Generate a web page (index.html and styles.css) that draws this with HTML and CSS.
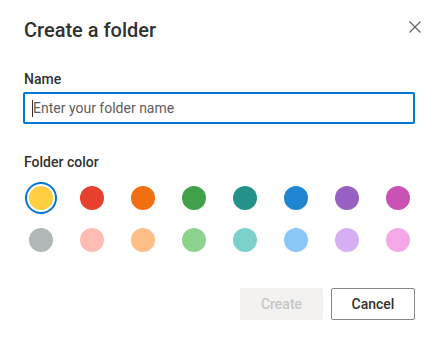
FILE: index.html
```html
<!DOCTYPE html>
<html lang="en">
<head>
<meta charset="utf-8">
<title>Create a folder</title>
<link rel="stylesheet" href="styles.css">
</head>
<body>
<div class="dialog">
  <div class="header">
    <h2 class="title">Create a folder</h2>
    <button class="close" aria-label="Close">
      <svg width="12" height="12" viewBox="0 0 12 12"><path d="M0.5 0.5 L11.5 11.5 M11.5 0.5 L0.5 11.5" stroke="#605e5c" stroke-width="1.1" fill="none"/></svg>
    </button>
  </div>
  <label class="label name-label" for="folder-name">Name</label>
  <div class="field">
    <input id="folder-name" class="input" type="text" placeholder="Enter your folder name">
  </div>
  <div class="label color-label">Folder color</div>
  <div class="swatches">
    <span class="swatch selected"><span class="dot" style="background:#ffcf3f"></span></span>
    <span class="swatch"><span class="dot" style="background:#e7402e"></span></span>
    <span class="swatch"><span class="dot" style="background:#f07011"></span></span>
    <span class="swatch"><span class="dot" style="background:#41a04a"></span></span>
    <span class="swatch"><span class="dot" style="background:#25918b"></span></span>
    <span class="swatch"><span class="dot" style="background:#1f85d0"></span></span>
    <span class="swatch"><span class="dot" style="background:#9960c4"></span></span>
    <span class="swatch"><span class="dot" style="background:#ca52b4"></span></span>
    <span class="swatch"><span class="dot" style="background:#b1b6b8"></span></span>
    <span class="swatch"><span class="dot" style="background:#ffbcb2"></span></span>
    <span class="swatch"><span class="dot" style="background:#ffbe86"></span></span>
    <span class="swatch"><span class="dot" style="background:#8ed290"></span></span>
    <span class="swatch"><span class="dot" style="background:#7bd2cd"></span></span>
    <span class="swatch"><span class="dot" style="background:#8ac7f8"></span></span>
    <span class="swatch"><span class="dot" style="background:#d5aef4"></span></span>
    <span class="swatch"><span class="dot" style="background:#f6a8e6"></span></span>
  </div>
  <div class="actions">
    <button class="btn btn-primary" disabled>Create</button>
    <button class="btn btn-default">Cancel</button>
  </div>
</div>
</body>
</html>
```
FILE: styles.css
```css
* { box-sizing: border-box; }
html, body {
  margin: 0;
  padding: 0;
  background: #ffffff;
}
body {
  font-family: Roboto, "Noto Sans", sans-serif;
  color: #323130;
  -webkit-font-smoothing: antialiased;
}
.dialog {
  width: 438px;
  height: 343px;
  padding: 16px 23px 0 23px;
}
.header {
  display: flex;
  justify-content: space-between;
  align-items: flex-start;
  height: 28px;
}
.title {
  margin: 0 0 0 1px;
  font-size: 20px;
  line-height: 28px;
  font-weight: 500;
  color: #323130;
}
.close {
  width: 22px;
  height: 22px;
  margin-right: -11px;
  padding: 0;
  border: 0;
  background: transparent;
  display: flex;
  align-items: center;
  justify-content: center;
}
.close svg { display: block; }
.label {
  display: block;
  font-size: 14px;
  line-height: 20px;
  font-weight: 500;
  color: #323130;
  margin-left: 1px;
}
.name-label { margin-top: 25px; }
.field {
  position: relative;
  margin-top: 3px;
}
.field::before {
  content: "";
  position: absolute;
  left: 9px;
  top: 8px;
  width: 1px;
  height: 17px;
  background: #323130;
}
.input {
  display: block;
  width: 100%;
  height: 32px;
  border: 2px solid #0078d4;
  border-radius: 2px;
  padding: 0 8px;
  font-family: inherit;
  font-size: 14px;
  color: #323130;
  outline: none;
  background: #fff;
}
.input::placeholder { color: #605e5c; opacity: 1; }
.color-label { margin-top: 28px; }
.swatches {
  display: grid;
  grid-template-columns: repeat(8, 32px);
  grid-auto-rows: 32px;
  column-gap: 19px;
  row-gap: 10px;
  margin-top: 10px;
  padding-left: 2px;
}
.swatch {
  width: 32px;
  height: 32px;
  border-radius: 50%;
  display: flex;
  align-items: center;
  justify-content: center;
  border: 2px solid transparent;
}
.swatch.selected { border-color: #0078d4; }
.dot {
  width: 24px;
  height: 24px;
  border-radius: 50%;
  display: block;
}
.actions {
  display: flex;
  justify-content: flex-end;
  gap: 8px;
  margin-top: 32px;
}
.btn {
  height: 32px;
  border-radius: 2px;
  font-family: inherit;
  font-size: 14px;
  font-weight: 500;
  padding: 0 16px;
}
.btn-primary {
  width: 83px;
  background: #f3f2f1;
  border: 1px solid #f3f2f1;
  color: #c8c6c4;
}
.btn-default {
  width: 84px;
  background: #ffffff;
  border: 1px solid #8a8886;
  color: #323130;
}
```
